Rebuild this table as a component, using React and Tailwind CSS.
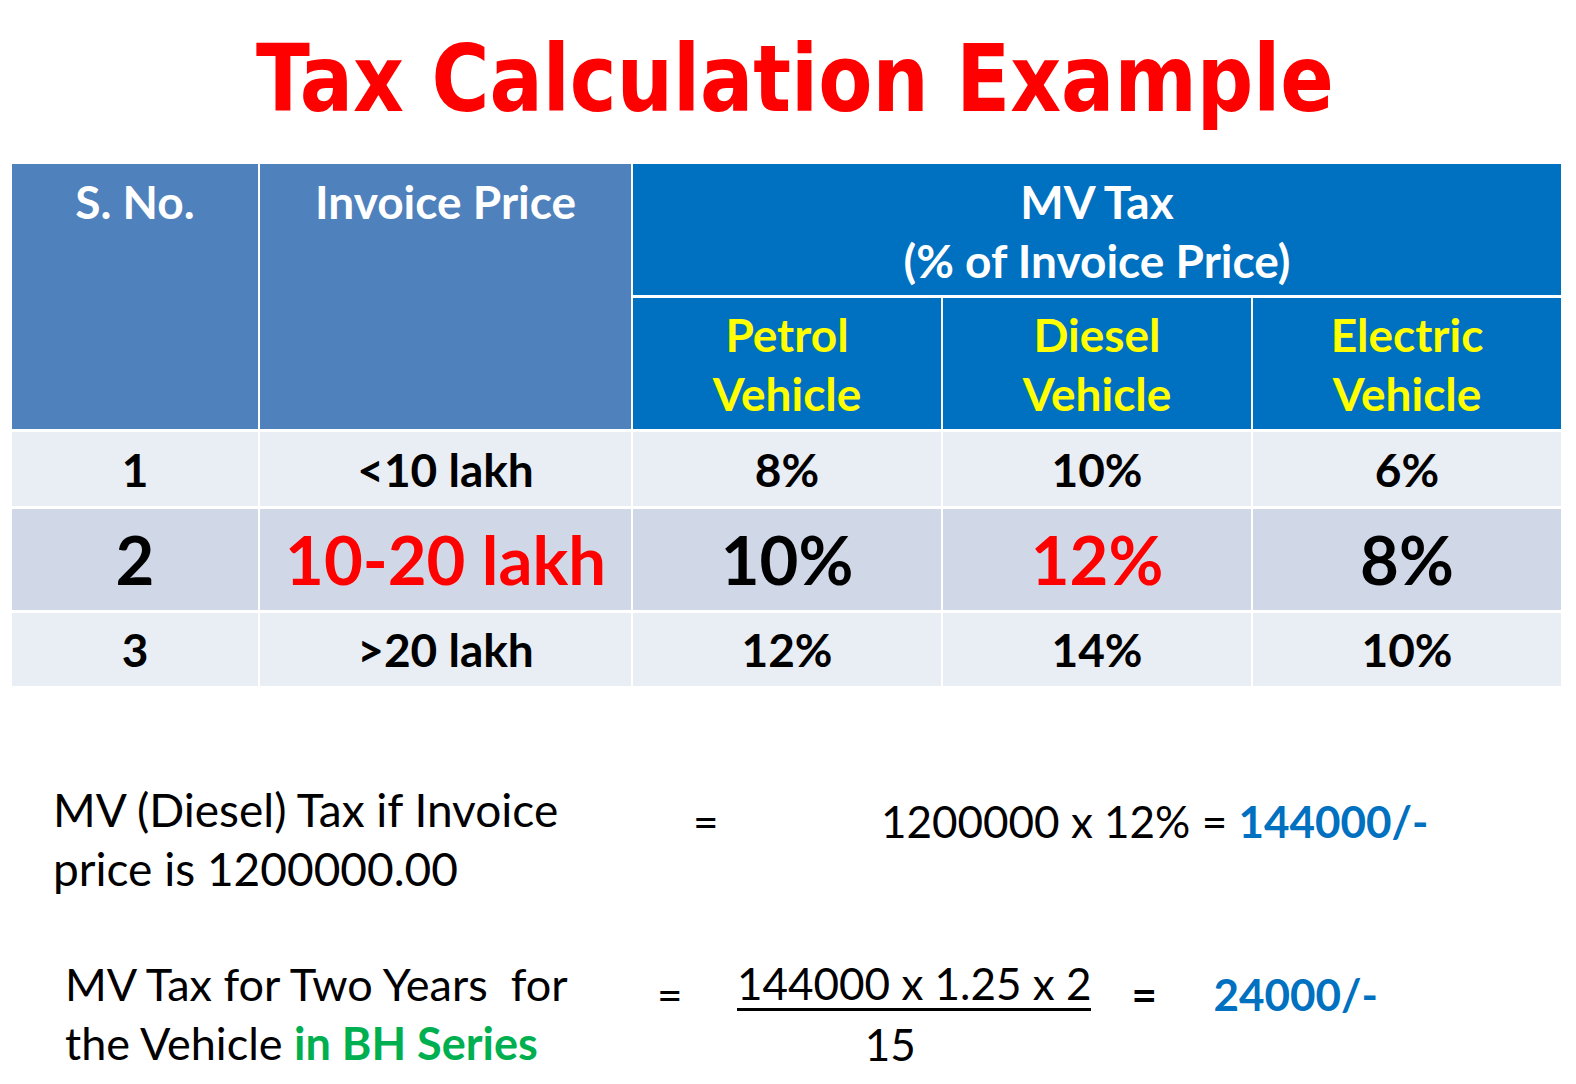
import React from 'react';

const rows = [
  { no: '1', price: '<10 lakh', petrol: '8%', diesel: '10%', electric: '6%', big: false },
  { no: '2', price: '10-20 lakh', petrol: '10%', diesel: '12%', electric: '8%', big: true },
  { no: '3', price: '>20 lakh', petrol: '12%', diesel: '14%', electric: '10%', big: false },
];

const Cell = ({ children, className = '' }) => (
  <div className={`flex items-center justify-center text-center ${className}`}>{children}</div>
);

export default function App() {
  return (
    <div className="w-[1576px] h-[1084px] bg-white overflow-hidden font-['Lato',sans-serif]">
      {/* Title */}
      <div className="h-[164px] flex justify-center pt-[27px] pl-[14px]">
        <h1 className="inline-block scale-y-[1.18] font-['DejaVu_Sans',sans-serif] font-bold text-[79px] leading-[110px] text-[#ff0000]">
          Tax Calculation Example
        </h1>
      </div>

      {/* Table */}
      <div className="ml-[12px] w-[1549px] grid grid-cols-[246px_371px_308px_308px_308px] grid-rows-[131px_131px_74px_101px_73px] gap-x-[2px] gap-y-[3px] font-bold">
        <div className="row-span-2 bg-[#4f81bd] text-white text-[46px] leading-[59px] text-center pt-[8px]">S. No.</div>
        <div className="row-span-2 bg-[#4f81bd] text-white text-[46px] leading-[59px] text-center pt-[8px]">Invoice Price</div>
        <div className="col-span-3 bg-[#0070c0] text-white text-[46px] leading-[59px] text-center pt-[8px]">
          MV Tax
          <br />
          (% of Invoice Price)
        </div>
        {['Petrol', 'Diesel', 'Electric'].map((v) => (
          <Cell key={v} className="bg-[#0070c0] text-[#ffff00] text-[46px] leading-[59px]">
            <span>
              {v}
              <br />
              Vehicle
            </span>
          </Cell>
        ))}

        {rows.map((r) => {
          const bg = r.big ? 'bg-[#d0d8e8]' : 'bg-[#e9edf4]';
          const size = r.big ? 'text-[67px]' : 'text-[46px]';
          return (
            <React.Fragment key={r.no}>
              <Cell className={`${bg} ${size} text-black`}>{r.no}</Cell>
              <Cell className={`${bg} ${size} ${r.big ? 'text-[#ff0000]' : 'text-black'}`}>{r.price}</Cell>
              <Cell className={`${bg} ${size} text-black`}>{r.petrol}</Cell>
              <Cell className={`${bg} ${size} ${r.big ? 'text-[#ff0000]' : 'text-black'}`}>{r.diesel}</Cell>
              <Cell className={`${bg} ${size} text-black`}>{r.electric}</Cell>
            </React.Fragment>
          );
        })}
      </div>

      {/* Calculation 1 */}
      <div className="mt-[94px] flex items-start text-[46px] leading-[59px] text-black">
        <div className="w-[693px] pl-[53px]">
          MV (Diesel) Tax if Invoice
          <br />
          price is 1200000.00
        </div>
        <div className="w-[188px] mt-[12px] text-[44px]">=</div>
        <div className="mt-[12px] text-[44px]">
          1200000 x 12% = <span className="font-bold text-[#0070c0]">144000/-</span>
        </div>
      </div>

      {/* Calculation 2 */}
      <div className="mt-[57px] flex items-start text-[45px] leading-[59px] text-black">
        <div className="w-[657px] pl-[65px]">
          MV Tax for Two Years&nbsp; for
          <br />
          the Vehicle <span className="font-bold text-[#00b050]">in BH Series</span>
        </div>
        <div className="w-[80px] mt-[10px] text-[44px]">=</div>
        <div className="flex flex-col items-center mt-[3px] text-[44px]">
          <div className="border-b-[3px] border-black leading-[50px]">144000 x 1.25 x 2</div>
          <div className="mt-[4px] mr-[48px]">15</div>
        </div>
        <div className="ml-[40px] w-[82px] mt-[10px] font-bold text-[44px]">=</div>
        <div className="mt-[10px] font-bold text-[44px] text-[#0070c0]">24000/-</div>
      </div>
    </div>
  );
}
